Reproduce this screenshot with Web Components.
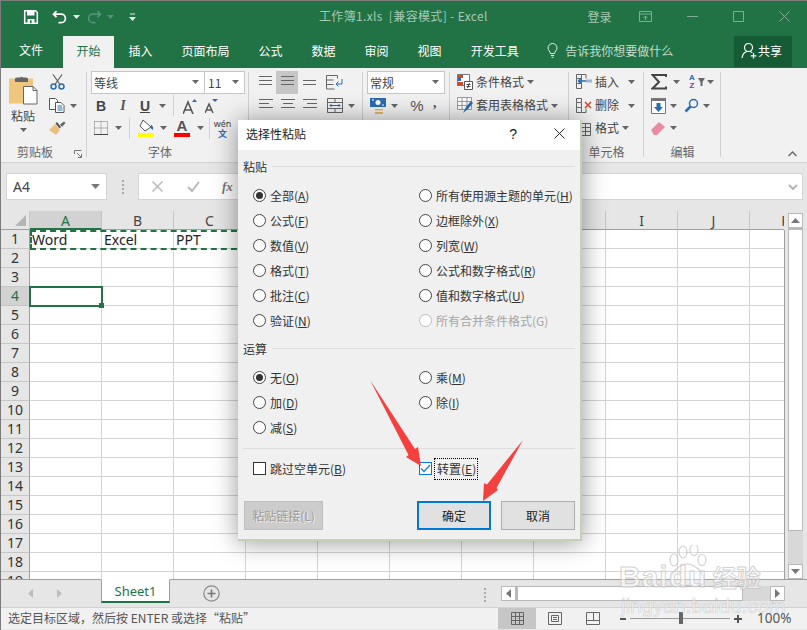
<!DOCTYPE html>
<html lang="zh"><head><meta charset="utf-8"><title>Excel</title>
<style>
html,body{margin:0;padding:0;background:#fff}
body{font-family:"Noto Sans CJK SC","Noto Sans",sans-serif;font-size:12px;color:#333;width:807px;height:630px;overflow:hidden}
</style></head><body>
<x-app></x-app>
<script>
const C=(c='#666')=>`<svg width="7" height="4" viewBox="0 0 7 4"><path d="M0 0h7L3.5 4z" fill="${c}"/></svg>`;
function def(name,css,html){
  customElements.define(name,class extends HTMLElement{
    connectedCallback(){
      if(this.shadowRoot)return;
      const r=this.attachShadow({mode:'open'});
      const h=typeof html==='function'?html(this):html;
      r.innerHTML=`<style>*{box-sizing:border-box}${css}</style>${h}`;
    }
  });
}

/* ---------- title bar ---------- */
def('x-titlebar',`
:host{display:flex;align-items:center;height:35px;background:#217346;color:#a6c9b5}
.qat{display:flex;align-items:center;width:318px;padding-left:22px;flex:none;margin-top:-3px}
.t{font-size:12px;letter-spacing:.35px;white-space:pre;margin-top:-6px}
.r{margin-left:auto;display:flex;align-items:center;margin-top:-5px}
.login{margin-right:11px}
.w{width:46.4px;display:flex;justify-content:center}
svg{display:block;flex:none}
`,`
<div class="qat">
<svg width="16" height="16" viewBox="0 0 16 16"><path d="M1.7 1.7h10.8l1.8 1.8v10.8H1.7z" fill="none" stroke="#fff" stroke-width="1.5"/><path d="M4 1.5h7.5v5H4z" fill="#fff"/><path d="M4.5 10h7v4.5h-7z" fill="#fff"/><path d="M7 11.2h1.6v3H7z" fill="#217346"/></svg>
<svg style="margin-left:13px" width="16" height="14" viewBox="0 0 16 14"><path d="M4.500 1.200 1.500 4.200l3 3M1.800 4.200h7.400a4.200 4.200 0 0 1 0 8.400H6.500" fill="none" stroke="#fff" stroke-width="1.700"/></svg>
<span style="margin:0 0 0 5px">${C('#e3efe8')}</span>
<svg style="margin-left:6px" width="16" height="14" viewBox="0 0 16 14"><path d="M11.500 1.200l3 3-3 3M14.200 4.200H6.800a4.200 4.200 0 0 0 0 8.400h2.700" fill="none" stroke="#53937a" stroke-width="1.700"/></svg>
<span style="margin-left:5px">${C('#53937a')}</span>
<svg style="margin-left:15px" width="7" height="8" viewBox="0 0 7 8"><path d="M1 .5h5v1H1zM0 4h7L3.500 8z" fill="#e3efe8"/></svg>
</div>
<div class="t">工作簿1.xls  [兼容模式] - Excel</div>
<div class="r"><span class="login">登录</span>
<span class="w"><svg width="13" height="11" viewBox="0 0 13 11"><path d="M.5.500h12v10H.5zM.5 3h12M6.500 9V5M4.500 7l2-2 2 2" fill="none" stroke="#7fae96"/></svg></span>
<span class="w"><svg width="11" height="1" viewBox="0 0 11 1"><path d="M0 0h11v1H0z" fill="#7fae96"/></svg></span>
<span class="w"><svg width="11" height="11" viewBox="0 0 11 11"><path d="M.5.500h10v10H.5z" fill="none" stroke="#7fae96"/></svg></span>
<span class="w"><svg width="11" height="11" viewBox="0 0 11 11"><path d="M.5.500l10 10M10.500.500l-10 10" stroke="#7fae96"/></svg></span>
</div>`);

/* ---------- tabs ---------- */
def('x-tabs',`
:host{display:flex;align-items:stretch;height:32px;background:#217346;color:#fff;font-size:12px}
.tab{display:flex;align-items:center;padding:0 14.5px 4px;flex:none}
.file{padding:0 20px 6px 18px}
.on{background:#f1f1f1;color:#217346;padding:0 13.500px 4px}
.tell{display:flex;align-items:center;gap:7px;margin-left:14px;color:#c3dccd;padding-bottom:4px}
.share{margin-left:auto;margin-right:16px;margin-bottom:1px;width:58px;background:#155c36;display:flex;align-items:center;padding:0 0 2px 7px;gap:0}
svg{display:block}
`,`
<div class="tab file">文件</div><div class="tab on">开始</div><div class="tab">插入</div><div class="tab">页面布局</div><div class="tab">公式</div><div class="tab">数据</div><div class="tab">审阅</div><div class="tab">视图</div><div class="tab">开发工具</div>
<div class="tell"><svg width="11" height="15" viewBox="0 0 11 15"><path d="M3.500 10.500C3.300 8.500 1 7.500 1 5a4.500 4.500 0 0 1 9 0c0 2.500-2.300 3.500-2.500 5.500zM3.800 12.500h3.400M4.500 14.300h2" fill="none" stroke="#e2efe8"/></svg>告诉我你想要做什么</div>
<div class="share"><svg width="17" height="17" viewBox="0 0 17 17"><circle cx="7.500" cy="5.500" r="4" fill="none" stroke="#fff" stroke-width="1.200"/><path d="M1 16c.5-3.500 2.500-6 5-6.500M9 9.500c1 .2 1.700.6 2.300 1.200M12.500 11v5.500M9.800 13.800h5.500" fill="none" stroke="#fff" stroke-width="1.200"/></svg>共享</div>`);

/* ---------- ribbon group ---------- */
def('x-group',`
:host{display:flex;flex-direction:column;flex:none;position:relative;height:90px;margin-top:2px}
:host::after{content:"";width:1px;height:85px;background:#d0d0d0;align-self:flex-end;margin-top:-87px}
.body{height:74px}
.label{height:15px;line-height:15px;font-size:12px;color:#666;text-align:center}
`,h=>`<div class="body"><slot></slot></div><div class="label" style="padding-right:${h.getAttribute('lp')||0}px">${h.getAttribute('label')}<slot name="launch"></slot></div>`);

const ICON={
paste:`<svg width="29" height="30" viewBox="0 0 29 30"><path d="M0 3.500h24v25H0z" fill="#efc67e"/><path d="M6 3.500a3 3 0 0 1 3-1h2a2 2 0 0 1 3 0h2a3 3 0 0 1 3 1v3.500H6z" fill="#666"/><path d="M14.500 11.500h9.500l4 4v13.500H14.500z" fill="#fff" stroke="#666"/><path d="M24 11.500v4h4" fill="none" stroke="#666"/></svg>`,
cut:`<svg width="15" height="16" viewBox="0 0 15 16"><path d="M3 .5l7 10M12 .5l-7 10" stroke="#666" stroke-width="1.300" fill="none"/><circle cx="3.500" cy="12.500" r="2.500" fill="none" stroke="#2b6cb0" stroke-width="1.500"/><circle cx="11.500" cy="12.500" r="2.500" fill="none" stroke="#2b6cb0" stroke-width="1.500"/></svg>`,
copy:`<svg width="16" height="15" viewBox="0 0 16 15"><path d="M.5.500h6l2 2v9H.5z" fill="#fff" stroke="#555"/><path d="M6.500 4.500h5.500l3 3v7H6.500z" fill="#fff" stroke="#555"/><path d="M8.500 8h4.500M8.500 10h5M8.500 12h5" stroke="#2b6cb0"/></svg>`,
brush:`<svg width="17" height="15" viewBox="0 0 17 15"><path d="M0 9l6-6 5 6-4 5z" fill="#e9bf7e"/><path d="M6.500 2.500l4 5 1.500-1.500-4-5z" fill="#555"/><path d="M11 3.500l4-3 1.500 1.500-3.500 4z" fill="#666"/></svg>`,
launch:`<svg width="8" height="8" viewBox="0 0 8 8"><path d="M.5 4V.5H7.500M3 3l4 4M7.500 4v3.500H4" fill="none" stroke="#777"/></svg>`,
border:`<svg width="14" height="14" viewBox="0 0 14 14"><path d="M.5.500h13v13M.5.500v13M7 .5v13M.5 7h13" fill="none" stroke="#777" stroke-dasharray="1 1"/><path d="M0 13.500h14" stroke="#444"/></svg>`,
fill:`<svg width="17" height="18" viewBox="0 0 17 18"><path d="M5 1l-3 6 5 5 6-4z" fill="#fff" stroke="#555"/><path d="M13 5.500c2 1.500 2.500 3.500 2 5-1 .5-2-.500-2-1.500z" fill="#2b6cb0"/><path d="M0 14h16v4H0z" fill="#ffff00"/></svg>`,
};
function lines(pattern){
  return `<svg width="15" height="13" viewBox="0 0 15 13">${pattern.map((p,i)=>`<path d="M${p[0]} ${.5+i*4}H${p[1]}" stroke="#666"/>`).join('')}</svg>`;
}

def('x-ribbon',`
:host{display:flex;height:95px;background:#f1f1f1;border-bottom:1px solid #d2d2d2;flex:none;color:#444}
.row{display:flex;align-items:center;height:23px}
.b{display:flex;align-items:center;justify-content:center;flex:none;height:22px}
.sep{width:1px;height:21px;background:#d0d0d0;flex:none}
svg{display:block;flex:none}
.sel{background:#fff;border:1px solid #c6c6c6;height:23px;display:flex;align-items:center;padding:0 5px 0 2px;justify-content:space-between;color:#444;font-size:12px}
.clip{display:flex}
.big{width:46px;display:flex;flex-direction:column;align-items:center;padding-top:5px;color:#444;margin-left:-1px}
.big span{margin-top:2px;line-height:18px;font-size:12px}
.hi{background:#c6c6c6;height:23px}
.bf{font-family:"Liberation Sans",sans-serif;font-weight:700;font-size:14px;color:#444}
.txt{font-size:12px;color:#444;padding-bottom:2px}
`,`
<x-group label="剪贴板" lp="18" style="width:86px">
  <div class="clip">
    <div class="big"><div style="margin-left:1px">${ICON.paste}</div><span>粘贴</span><div style="margin-top:3px">${C()}</div></div>
    <div style="padding-left:3px">
      <div class="row" style="height:24px"><span class="b" style="width:16px">${ICON.cut}</span></div>
      <div class="row"><span class="b" style="width:16px">${ICON.copy}</span><span style="margin-left:5px">${C()}</span></div>
      <div class="row" style="height:22px"><span class="b" style="width:17px">${ICON.brush}</span></div>
    </div>
  </div>
  <span slot="launch" style="position:absolute;left:73px;bottom:2px;display:block">${ICON.launch}</span>
</x-group>
<x-group label="字体" lp="16" style="width:162px">
  <div style="padding-left:4px">
    <div class="row" style="height:24px"><div class="sel" style="width:114px">等线${C()}</div><div class="sel" style="width:40px;border-left:0;padding-left:3px">11${C()}</div></div>
    <div class="row" style="margin-left:-1px">
      <span class="b bf" style="width:22px">B</span><span class="b" style="width:22px;font:italic 700 14px 'Liberation Serif';color:#555">I</span>
      <span class="b bf" style="width:22px;text-decoration:underline">U</span><span class="b" style="width:12px">${C()}</span>
      <span style="width:5px"></span><span class="sep"></span>
      <span class="b" style="width:31px;padding-left:1px"><svg width="15" height="16" viewBox="0 0 15 16"><path d="M0 16 5 4l5 12M2 12h6" fill="none" stroke="#555" stroke-width="1.600"/><path d="M9 4l2.500-3L14 4z" fill="#2b6cb0"/></svg></span>
      <span class="b" style="width:13px"><svg width="13" height="15" viewBox="0 0 13 15"><path d="M0 15 4 6l4 9M1.500 12h5" fill="none" stroke="#555" stroke-width="1.500"/><path d="M7 1h6l-3 3z" fill="#2b6cb0"/></svg></span>
    </div>
    <div class="row" style="margin-left:-1px;height:22px">
      <span class="b" style="width:22px">${ICON.border}</span><span class="b" style="width:12px">${C()}</span>
      <span style="width:5px"></span><span class="sep"></span>
      <span class="b" style="width:27px;padding-left:5px">${ICON.fill}</span><span class="b" style="width:9px;padding-left:3px">${C()}</span>
      <span class="b" style="width:25px;padding-left:7px;color:#555;font:700 15px 'Liberation Sans'"><span style="width:16px;height:18px;display:flex;justify-content:center;line-height:14px;background:linear-gradient(#0000 14px,#f00 14px)">A</span></span>
      <span class="b" style="width:13px;padding-left:5px">${C()}</span>
      <span style="width:5px"></span><span class="sep"></span>
      <span class="b" style="width:25px;flex-direction:column;font:9px/10px 'Noto Sans';color:#444">wén<span style="color:#2b6cb0;font:700 9px/9px 'Noto Sans CJK SC'">文</span></span>
    </div>
  </div>
</x-group>
<x-group label="" style="width:114px">
  <div style="padding-left:5px">
    <div class="row" style="height:24px">
      <span class="b" style="width:22px">${lines([[1,14],[1,14],[1,14]])}</span>
      <span class="b hi" style="width:22px">${lines([[1,14],[1,14],[1,14]])}</span>
      <span class="b" style="width:22px;padding-top:8px">${lines([[1,14],[1,14]])}</span>
      <span class="b" style="width:28px;padding-left:1px"><svg width="17" height="15" viewBox="0 0 17 15"><path d="M.5.500h11M.5 5h7M.5 9.500h7M.5 14h8M.5.500v13.500M11.500.500v3" stroke="#666" fill="none"/><path d="M16 4v5h-6M12.500 6.500 10 9l2.500 2.500" stroke="#2b6cb0" fill="none"/></svg></span>
    </div>
    <div class="row">
      <span class="b" style="width:22px">${lines([[1,15],[1,11],[1,15]])}</span>
      <span class="b" style="width:22px">${lines([[1,15],[3,13],[1,15]])}</span>
      <span class="b" style="width:22px">${lines([[1,15],[5,15],[1,15]])}</span>
      <span class="b" style="width:28px;padding-left:1px"><svg width="16" height="15" viewBox="0 0 16 15"><path d="M.5.500h15v14H.5zM.5 4.500h15M.5 10.500h15M8 .5v4M8 10.500v4" fill="none" stroke="#666"/><path d="M3 7.500h10M4.500 6 3 7.500 4.500 9M11.500 6 13 7.500 11.500 9" fill="none" stroke="#2b6cb0"/></svg></span>
      <span>${C()}</span>
    </div>
  </div>
</x-group>
<x-group label="" style="width:87px">
  <div style="padding-left:4px">
    <div class="row" style="height:24px"><div class="sel" style="width:78px">常规${C()}</div></div>
    <div class="row" style="padding-left:3px">
      <svg width="16" height="16" viewBox="0 0 16 16"><path d="M0 0h16v9H0z" fill="#2b6cb0"/><circle cx="8" cy="4.500" r="2.500" fill="#fff"/><path d="M2 2h2M12 7h2" stroke="#fff"/><path d="M5 11h8v1.500H5zM5 14h8v2H5z" fill="#e5b56c"/></svg>
      <span style="margin-left:5px">${C()}</span>
      <span style="margin-left:8px;font:15px 'Liberation Sans';color:#555;width:22px;text-align:center">%</span>
      <span style="margin-left:5px;font:700 14px 'Liberation Serif';color:#555;margin-top:-5px">,</span>
    </div>
  </div>
</x-group>
<x-group label="" style="width:119px">
  <div style="padding-left:7px">
    <div class="row" style="height:24px"><svg width="16" height="16" viewBox="0 0 16 16"><path d="M.5.500h12v11H.5z" fill="#fff" stroke="#777"/><path d="M1 1h5v3H1z" fill="#d24726"/><path d="M1 4h3v3H1z" fill="#2b6cb0"/><path d="M1 8h5v3H1z" fill="#d24726"/><path d="M7.500 7.500h8v8h-8z" fill="#fff" stroke="#555"/><path d="M9.500 10.500h4M9.500 12.500h4M12.500 9l-2 5" stroke="#444" fill="none"/></svg><span class="txt" style="margin-left:3px">条件格式</span><span style="margin-left:3px">${C()}</span></div>
    <div class="row"><svg width="17" height="17" viewBox="0 0 17 17"><path d="M.5.500h14v12H.5zM.5 4.500h14M.5 8.500h14M5 .5v12M10 .5v12" fill="#fff" stroke="#999"/><path d="M6 16l3-6 5-6 2 2-5 6z" fill="#2b6cb0"/></svg><span class="txt" style="margin-left:2px">套用表格格式</span><span style="margin-left:3px">${C()}</span></div>
  </div>
</x-group>
<x-group label="单元格" style="width:75px">
  <div style="padding-left:7px">
    <div class="row" style="height:24px"><svg width="16" height="16" viewBox="0 0 16 16"><path d="M.5.500h5v4h-5zM.5 4.500v5h5v-5M.5 9.500v5h5v-5M5.500 .5H10v4" fill="none" stroke="#666"/><path d="M10 5.500h6v3h-6z" fill="#9bb7d4"/><path d="M10 7H2.500M5 4.500 2.500 7 5 9.500" fill="none" stroke="#2b6cb0" stroke-width="1.500"/></svg><span class="txt" style="margin-left:3px">插入</span><span style="margin-left:9px">${C()}</span></div>
    <div class="row"><svg width="16" height="16" viewBox="0 0 16 16"><path d="M.5.500h5v4h-5zM.5 4.500v5h5v-5M.5 9.500v5h5v-5M5.500 14.500H10v-4" fill="none" stroke="#666"/><path d="M9 4l6 6M15 4l-6 6" stroke="#d24726" stroke-width="1.500"/></svg><span class="txt" style="margin-left:3px">删除</span><span style="margin-left:9px">${C()}</span></div>
    <div class="row" style="height:22px"><svg width="16" height="16" viewBox="0 0 16 16"><path d="M4.500 3.500h10v12h-10zM4.500 7.500h10M4.500 11.500h10M9.500 3.500v12" fill="none" stroke="#666"/></svg><span class="txt" style="margin-left:3px">格式</span><span style="margin-left:3px">${C()}</span></div>
  </div>
</x-group>
<x-group label="编辑" style="width:77px">
  <div style="padding-left:7px">
    <div class="row" style="height:24px"><svg width="16" height="16" viewBox="0 0 16 16"><path d="M15 3V1H1.500l6.500 7-6.500 6.500H15v-2" fill="none" stroke="#444" stroke-width="2"/></svg><span style="margin-left:6px">${C()}</span><span style="width:14px;font:700 8px/8px 'Liberation Sans';text-align:center;color:#2b6cb0;margin-left:5px">A<br><span style="color:#7b3fa8">Z</span></span><svg style="margin-left:-1px" width="7" height="8" viewBox="0 0 7 8"><path d="M0 0h7L4.500 4v4h-2V4z" fill="#666"/></svg><span style="margin-left:2px">${C()}</span></div>
    <div class="row"><svg width="15" height="16" viewBox="0 0 15 16"><path d="M.5.500h14v15H.5z" fill="#fff" stroke="#777"/><path d="M0 0h15v3H0z" fill="#777"/><path d="M5.500 5h4v4H12l-4.500 5L3 9h2.500z" fill="#2b6cb0"/></svg><span style="margin-left:4px">${C()}</span><svg style="margin-left:7px" width="15" height="15" viewBox="0 0 15 15"><circle cx="9.500" cy="5.500" r="4" fill="none" stroke="#2b6cb0" stroke-width="1.500"/><path d="M6.500 8.500 1.500 13.500" stroke="#2b6cb0" stroke-width="2.500"/></svg><span style="margin-left:4px">${C()}</span></div>
    <div class="row" style="height:22px"><svg width="14" height="13" viewBox="0 0 14 13"><path d="M0 8l8-8 6 5-8 8H3z" fill="#e98aa0"/></svg><span style="margin-left:5px">${C()}</span></div>
  </div>
</x-group>
<div style="margin-left:auto;margin-right:11px;align-self:flex-end;margin-bottom:5px"><svg width="9" height="6" viewBox="0 0 9 6"><path d="M.5 5l4-4 4 4" fill="none" stroke="#666" stroke-width="1.400"/></svg></div>
`);

/* ---------- formula bar ---------- */
def('x-formula',`
:host{display:flex;height:48px;background:#e6e6e6;padding:10px 5px 11px 5px;flex:none;align-items:stretch}
.name{width:101px;background:#fff;border:1px solid #d4d4d4;display:flex;align-items:center;justify-content:space-between;padding:0 6px;font:14px "Noto Sans",sans-serif;color:#444}
.dots{width:31px;display:flex;flex-direction:column;align-items:center;justify-content:center;gap:2px}
.dots i{width:2px;height:2px;background:#a9a9a9;display:block}
.box{flex:1;background:#fff;border:1px solid #d4d4d4;display:flex;align-items:center;padding-left:13px;margin-right:0}
.chev{margin-left:auto;margin-right:4px}
.fx{margin-left:22px;font:italic 700 13px "Liberation Serif",serif;color:#777}
svg{display:block}
`,`
<div class="name">A4${C('#777').replace('width="7" height="4"','width="9" height="5"')}</div>
<div class="dots"><i></i><i></i><i></i><i></i></div>
<div class="box">
<svg width="11" height="11" viewBox="0 0 11 11"><path d="M.5.500l10 10M10.500.500l-10 10" stroke="#b8b8b8" stroke-width="1.500"/></svg>
<svg style="margin-left:24px" width="13" height="11" viewBox="0 0 13 11"><path d="M1 6l4 4 7-9" fill="none" stroke="#b8b8b8" stroke-width="2"/></svg>
<span class="fx">fx</span>
<svg class="chev" width="10" height="6" viewBox="0 0 10 6"><path d="M1 1l4 4 4-4" fill="none" stroke="#b0b0b0" stroke-width="1.800"/></svg>
</div>`);

/* ---------- sheet ---------- */
const cols='ABCDEFGHIJK'.split('');
const data={1:{A:'Word',B:'Excel',C:'PPT'}};
def('x-sheet',`
:host{display:flex;height:368px;background:#e6e6e6;flex:none}
.main{width:783px;overflow:hidden;background:#fff;flex:none;display:grid}
.grid{grid-area:1/1;display:grid;grid-template-columns:29px repeat(11,72px);grid-template-rows:19px repeat(19,19px);font:14px "Noto Sans",sans-serif;color:#222}
.ch{background:#e6e6e6;border-right:1px solid #c6c6c6;border-bottom:1px solid #9f9f9f;text-align:center;line-height:19px;font-size:14px;color:#444}
.ch.on{background:#d2d2d2;color:#217346;border-bottom:2px solid #217346}
.corner{background:#e6e6e6;border-right:1px solid #c6c6c6;border-bottom:1px solid #9f9f9f;display:flex;align-items:flex-end;justify-content:flex-end;padding:0 3px 3px 0}
.rh{background:#e6e6e6;border-right:1px solid #9f9f9f;border-bottom:1px solid #c6c6c6;text-align:center;line-height:18px;font-size:14px;color:#333}
.rh.on{background:#d2d2d2;color:#217346}
.c{border-right:1px solid #d4d4d4;border-bottom:1px solid #d4d4d4;line-height:20px;padding-left:2px;white-space:nowrap;overflow:hidden}
.over{pointer-events:none}
.ants{grid-column:2/5;grid-row:2;border:2px dashed #217346;margin:0 -1px -1px 0}
.active{grid-column:2;grid-row:5;border:2px solid #217346;margin:-1px;position:relative}
.active::after{content:"";position:absolute;right:-3px;bottom:-3px;width:5px;height:5px;background:#217346}
.edge{width:1px;background:#9f9f9f;flex:none;margin-top:19px}
.sb{margin-left:3px;width:15px;display:flex;flex-direction:column;margin-top:2px}
.ab{height:15px;background:#fff;border:1px solid #b9b9b9;display:flex;align-items:center;justify-content:center;flex:none}
.th{height:303px;background:#fff;border:1px solid #b9b9b9;border-top:2px solid #b9b9b9;flex:none}
.tr{flex:1;background:#d8d8d8}
svg{display:block}
`,()=>{
 let g=`<div class="corner"><svg width="11" height="11" viewBox="0 0 11 11"><path d="M11 0v11H0z" fill="#b4b4b4"/></svg></div>`;
 cols.forEach((c,i)=>g+=`<div class="ch${i==0?' on':''}">${c}</div>`);
 for(let r=1;r<=19;r++){
   g+=`<div class="rh${r==4?' on':''}">${r}</div>`;
   cols.forEach(c=>g+=`<div class="c">${(data[r]&&data[r][c])||''}</div>`);
 }
 return `<div class="main"><div class="grid">${g}</div><div class="grid over"><div class="ants"></div><div class="active"></div></div></div><div class="edge"></div>
 <div class="sb"><div class="ab"><svg width="9" height="5" viewBox="0 0 9 5"><path d="M0 5h9L4.500 0z" fill="#777"/></svg></div><div class="th"></div><div class="tr"></div><div class="ab"><svg width="9" height="5" viewBox="0 0 9 5"><path d="M0 0h9L4.500 5z" fill="#777"/></svg></div></div>`;
});

/* ---------- sheet tabs ---------- */
def('x-sheettabs',`
:host{display:flex;height:28px;background:#e6e6e6;flex:none;align-items:flex-start;border-top:1px solid #9f9f9f}
.nav{width:100px;display:flex;padding:9px 0 0 27px;gap:24px;flex:none}
.tab{width:69px;height:24px;background:#fff;border:1px solid #9f9f9f;border-top:1px solid #fff;margin-top:-1px;border-bottom:2px solid #217346;color:#217346;font:13px "Noto Sans",sans-serif;text-align:center;line-height:22px;flex:none}
.add{margin-left:33px;margin-top:5px;flex:none}
.grip{margin-left:264px;padding-top:8px;display:flex;flex-direction:column;gap:2px;flex:none}
.grip i{display:block;width:2px;height:2px;background:#aaa}
.hs{margin-left:15px;margin-top:6px;display:flex;height:15px;flex:none}
.ab{width:15px;background:#fff;border:1px solid #b9b9b9;display:flex;align-items:center;justify-content:center}
.th{width:227px;background:#fff;border:1px solid #b9b9b9;border-left:2px solid #b9b9b9}
.tr{width:27px;background:#d8d8d8}
svg{display:block}
`,`
<div class="nav"><svg width="5" height="9" viewBox="0 0 5 9"><path d="M5 0v9L0 4.500z" fill="#bdbdbd"/></svg><svg width="5" height="9" viewBox="0 0 5 9"><path d="M0 0v9l5-4.500z" fill="#bdbdbd"/></svg></div>
<div class="tab">Sheet1</div>
<svg class="add" width="17" height="17" viewBox="0 0 17 17"><circle cx="8.500" cy="8.500" r="7.700" fill="none" stroke="#888" stroke-width="1.200"/><path d="M8.500 4.500v8M4.500 8.500h8" stroke="#777" stroke-width="1.600"/></svg>
<div class="grip"><i></i><i></i><i></i><i></i></div>
<div class="hs"><div class="ab"><svg width="5" height="9" viewBox="0 0 5 9"><path d="M5 0v9L0 4.500z" fill="#777"/></svg></div><div class="th"></div><div class="tr"></div><div class="ab"><svg width="5" height="9" viewBox="0 0 5 9"><path d="M0 0v9l5-4.500z" fill="#777"/></svg></div></div>`);

/* ---------- status bar ---------- */
def('x-status',`
:host{display:flex;height:22px;background:#f1f1f1;border-top:1px solid #d2d2d2;flex:none;align-items:stretch;color:#555;font-size:12px}
.msg{width:497px;padding-left:7px;line-height:20px;flex:none;white-space:pre}
.v{width:38px;display:flex;align-items:center;justify-content:center;flex:none}
.v.on{background:#c6c6c6}
.z{display:flex;align-items:center;margin-left:8px}
.sl{width:100px;height:1px;background:#999;margin:0 4px;position:relative}
.sl i{position:absolute;left:49px;top:-6px;width:4px;height:12px;background:#666}
.pct{margin-left:15px;font:13.500px/20px "Noto Sans",sans-serif;color:#555}
svg{display:block}
`,`
<div class="msg">选定目标区域，然后按 ENTER 或选择“粘贴”</div>
<div class="v on"><svg width="13" height="13" viewBox="0 0 13 13"><path d="M.5.500h12v12H.5zM.5 4.500h12M.5 8.500h12M4.500 .5v12M8.500 .5v12" fill="none" stroke="#666"/></svg></div>
<div class="v"><svg width="14" height="13" viewBox="0 0 14 13"><path d="M.5.500h13v12H.5zM3.500 3.500h7v6h-7zM5 5.500h4M5 7.500h4" fill="none" stroke="#666"/></svg></div>
<div class="v"><svg width="14" height="13" viewBox="0 0 14 13"><path d="M.5.500h13v12H.5zM.5 8.500h13M7.500 .5v8" fill="none" stroke="#666"/></svg></div>
<div class="z"><svg width="6" height="2" viewBox="0 0 6 2"><path d="M0 0h6v2H0z" fill="#555"/></svg><div class="sl"><i></i></div><svg width="8" height="8" viewBox="0 0 8 8"><path d="M3 0h2v3h3v2H5v3H3V5H0V3h3z" fill="#555"/></svg></div>
<div class="pct">100%</div>`);

/* ---------- dialog parts ---------- */
def('x-radio',`
:host{display:flex;align-items:center;height:25px;gap:4px;font-size:12px;color:#333;white-space:nowrap}
:host([disabled]){color:#a6a6a6}
.r{width:13px;height:13px;border-radius:50%;border:1px solid #444;background:#fff;display:flex;align-items:center;justify-content:center;flex:none}
:host([disabled]) .r{border-color:#bcbcbc}
.r i{display:block;width:7px;height:7px;border-radius:50%;background:#333}
`,h=>`<span class="r">${h.hasAttribute('checked')?'<i></i>':''}</span><span><slot></slot></span>`);

def('x-check',`
:host{display:flex;align-items:center;height:25px;gap:4px;font-size:12px;color:#333;white-space:nowrap}
.b{width:13px;height:13px;border:1px solid #333;background:#fff;flex:none;display:flex;align-items:center;justify-content:center}
:host([checked]) .b{border-color:#0078d7}
:host([focus]) .t{outline:1px dotted #000;padding:0 1px 0 2px;margin-left:-1px;line-height:19px;height:20px}
svg{display:block}
`,h=>`<span class="b">${h.hasAttribute('checked')?'<svg width="11" height="9" viewBox="0 0 11 9"><path d="M1 4.500 4 7.500 10 1" fill="none" stroke="#1e7fd4" stroke-width="1.300"/></svg>':''}</span><span class="t"><slot></slot></span>`);

def('x-btn',`
:host{display:flex;align-items:center;justify-content:center;height:29px;background:#e1e1e1;border:1px solid #adadad;font-size:12px;color:#222;flex:none;width:74px}
:host([primary]){border:2px solid #0078d7}
:host([disabled]){background:#cccccc;border-color:#bfbfbf;color:#9b9b9b;width:79px;text-shadow:1px 1px 0 #eee}
`,`<slot></slot>`);

def('x-heading',`
:host{display:flex;align-items:center;height:18px;padding:0 5px;gap:5px;font-size:12px;color:#333}
.l{flex:1;height:1px;background:#dcdcdc}
`,`<slot></slot><span class="l"></span>`);

def('x-paste-dialog',`
:host{position:absolute;left:237px;top:119px;width:344px;height:421px;background:#f0f0f0;border:0 solid #c2d2b6;border-width:0 2px 2px 0;box-shadow:0 1px 24px rgba(0,0,0,.42);display:block;color:#333;z-index:5}
.head{height:30px;background:#fff;display:flex;align-items:center;padding:0 0 3px 8px;font-size:12px;color:#222;margin-bottom:7px}
.q{margin-left:auto;margin-right:37px;font:14px "Liberation Sans",sans-serif}
.x{margin-right:15px}
.g{display:grid;grid-template-columns:166px 1fr;padding:8px 0 0 15px}
.sep{height:1px;background:#dcdcdc;margin:8px 5px 7px}
.checks{display:grid;grid-template-columns:166px 1fr;padding-left:15px}
.btns{display:flex;padding:20px 0 0 6px}
.sp{margin-top:6px}
u{text-underline-offset:1px}
svg{display:block}
`,`
<div class="head">选择性粘贴<span class="q">?</span><svg class="x" width="11" height="11" viewBox="0 0 11 11"><path d="M.5.500l10 10M10.500.500l-10 10" stroke="#222"/></svg></div>
<x-heading>粘贴</x-heading>
<div class="g">
<x-radio checked>全部(<u>A</u>)</x-radio><x-radio>所有使用源主题的单元(<u>H</u>)</x-radio>
<x-radio>公式(<u>F</u>)</x-radio><x-radio>边框除外(<u>X</u>)</x-radio>
<x-radio>数值(<u>V</u>)</x-radio><x-radio>列宽(<u>W</u>)</x-radio>
<x-radio>格式(<u>T</u>)</x-radio><x-radio>公式和数字格式(<u>R</u>)</x-radio>
<x-radio>批注(<u>C</u>)</x-radio><x-radio>值和数字格式(<u>U</u>)</x-radio>
<x-radio>验证(<u>N</u>)</x-radio><x-radio disabled>所有合并条件格式(G)</x-radio>
</div>
<x-heading class="sp">运算</x-heading>
<div class="g">
<x-radio checked>无(<u>O</u>)</x-radio><x-radio>乘(<u>M</u>)</x-radio>
<x-radio>加(<u>D</u>)</x-radio><x-radio>除(<u>I</u>)</x-radio>
<x-radio>减(<u>S</u>)</x-radio>
</div>
<div class="sep"></div>
<div class="checks"><x-check>跳过空单元(<u>B</u>)</x-check><x-check checked focus>转置(<u>E</u>)</x-check></div>
<div class="btns"><x-btn disabled>粘贴链接(L)</x-btn><span style="width:94px"></span><x-btn primary>确定</x-btn><span style="width:10px"></span><x-btn>取消</x-btn></div>
`);

/* ---------- annotation arrows ---------- */
def('x-arrows',`
:host{position:absolute;left:-1px;top:-1px;width:807px;height:630px;display:block;pointer-events:none;z-index:6}
svg{display:block}
`,`<svg width="807" height="630" viewBox="0 0 807 630">
<path d="M370 380 415 449 418 447 421 466 406 457 408.500 455z" fill="#f4403f"/>
<path d="M523 440 496.500 488 498 490 483 501 484 483 487 484.500z" fill="#f4403f"/>
</svg>`);

/* ---------- watermark ---------- */
def('x-watermark',`
:host{position:absolute;left:617px;top:544px;width:150px;height:70px;display:block;pointer-events:none;z-index:7}
.wrap{position:relative;width:150px;height:70px}
svg{position:absolute;left:47px;top:0}
.b{position:absolute;left:1px;top:14px;font:700 30px/36px "Liberation Sans",sans-serif;color:rgba(255,255,255,.55);-webkit-text-stroke:1px rgba(190,190,190,.7);letter-spacing:1px;white-space:nowrap}
.j{position:absolute;left:3px;top:50px;font:20px/22px "Liberation Sans",sans-serif;color:rgba(255,255,255,.6);-webkit-text-stroke:.7px rgba(190,190,190,.6);letter-spacing:.2px;white-space:nowrap}
`,`<div class="wrap">
<svg width="65" height="46" viewBox="0 0 65 46" fill="rgba(255,255,255,.35)" stroke="rgba(190,190,190,.7)" stroke-width="1.200"><ellipse cx="18" cy="7" rx="4" ry="6"/><ellipse cx="29" cy="5" rx="4" ry="5.500"/><ellipse cx="37" cy="15" rx="4" ry="5.500"/><ellipse cx="9" cy="15" rx="4" ry="6"/><path d="M6 35c0-8 9-16 16-16s17 8 17 16c0 5-5 7-10 6-5-1-9-1-13 0-6 1-10-1-10-6z"/></svg>
<div class="b">Baidu <span style="font:600 24px 'Noto Sans CJK SC',sans-serif;letter-spacing:0;margin-left:-4px">经验</span></div>
<div class="j">jingyan.baidu.com</div>
</div>`);

/* ---------- app ---------- */
def('x-app',`
:host{display:flex;flex-direction:column;width:807px;height:630px;border:1px solid #7b7b7b;background:#e6e6e6;position:relative;overflow:hidden}
`,`<x-titlebar></x-titlebar><x-tabs></x-tabs><x-ribbon></x-ribbon><x-formula></x-formula><x-sheet></x-sheet><x-sheettabs></x-sheettabs><x-status></x-status><x-paste-dialog></x-paste-dialog><x-arrows></x-arrows><x-watermark></x-watermark>`);
</script>
</body></html>
